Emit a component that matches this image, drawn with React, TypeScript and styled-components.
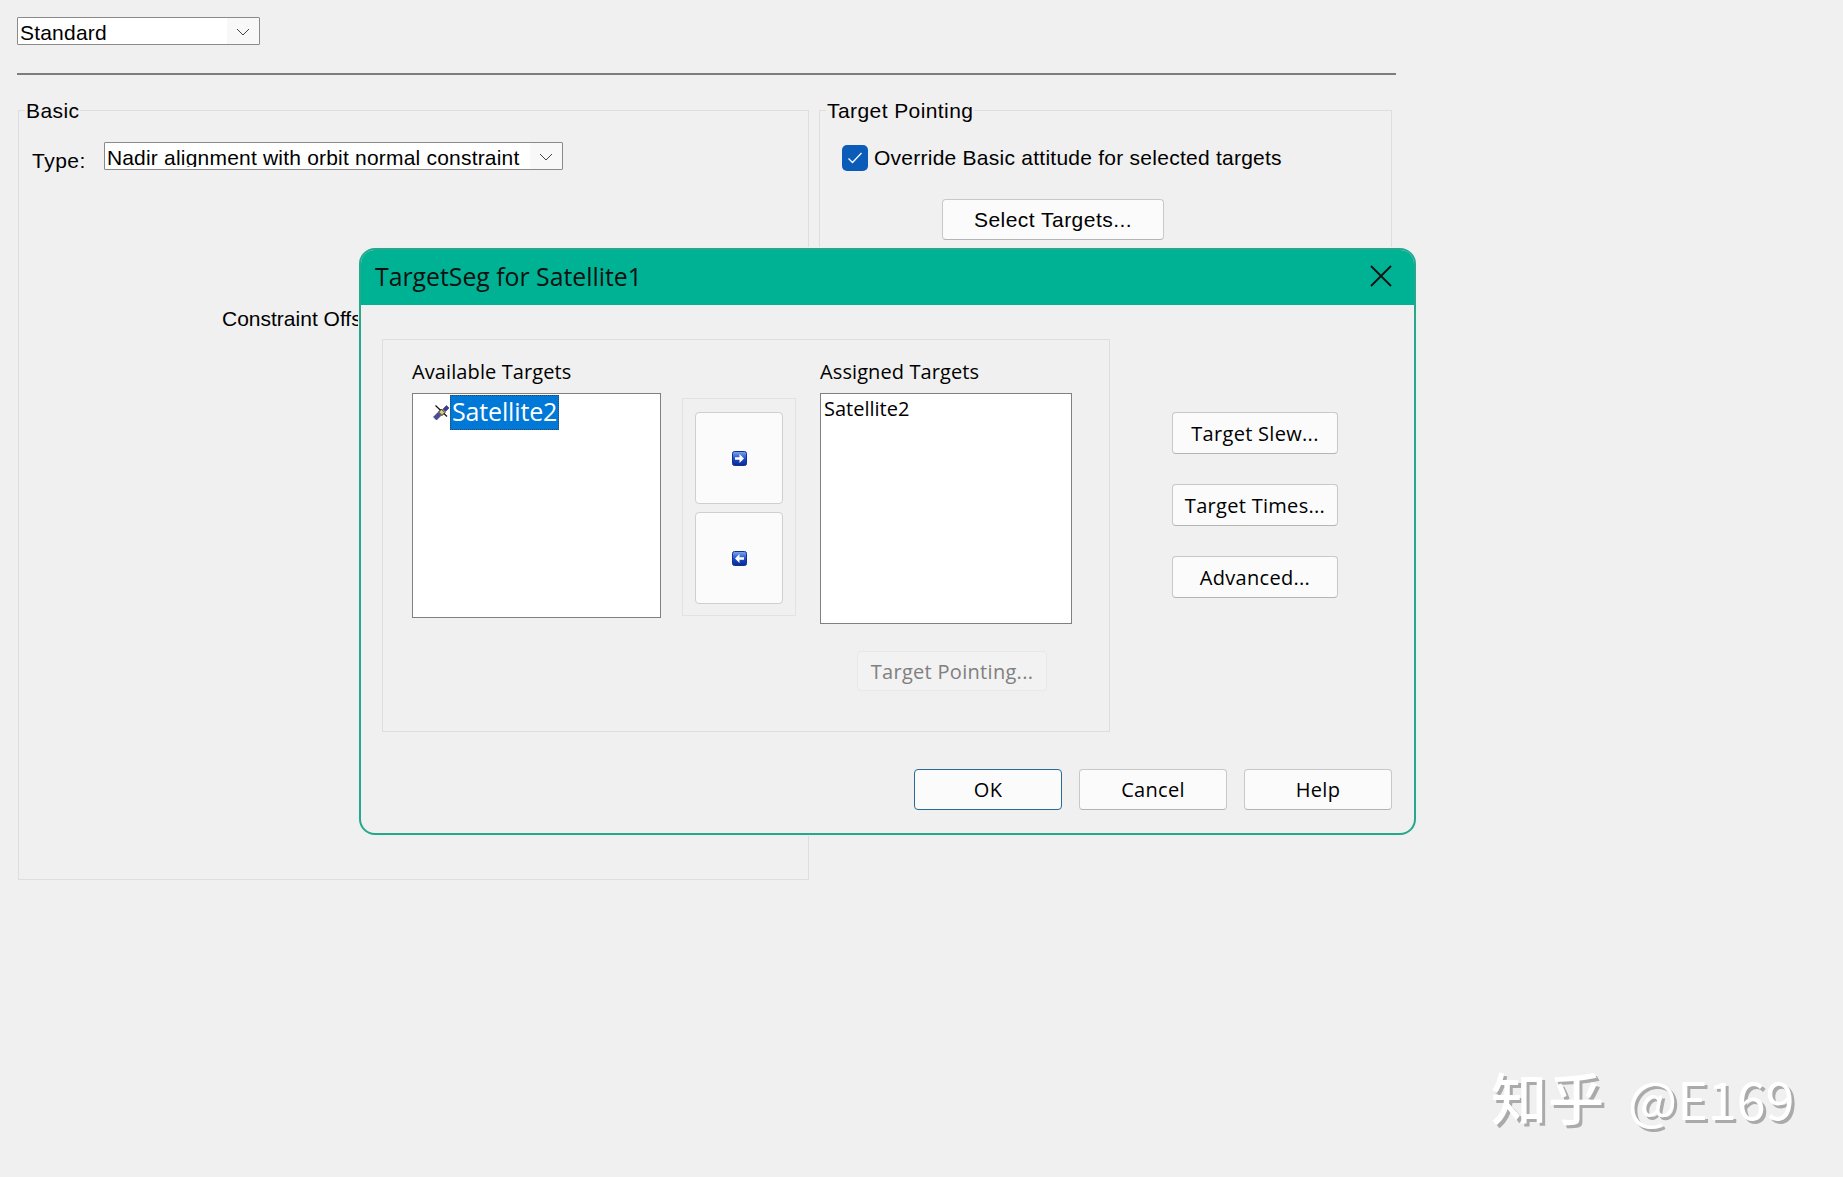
import styled, { createGlobalStyle } from "styled-components";

const GlobalStyle = createGlobalStyle`
    html, body {
        margin: 0;
        padding: 0;
        background: #f0f0f0;
    }
`;

const uiFont = `"Liberation Sans", Arial, sans-serif`;
const dialogFont = `"Open Sans", "Noto Sans", sans-serif`;

const Page = styled.div`
    position: relative;
    width: 1843px;
    height: 1177px;
    overflow: hidden;
    box-sizing: border-box;
    padding: 17px 0 0 17px;
    background: #f0f0f0;
    color: #000;
    font-family: ${uiFont};
    font-size: 21px;
`;

const Combo = styled.div<{ $width: number }>`
    display: flex;
    align-items: flex-start;
    box-sizing: border-box;
    width: ${(p) => p.$width}px;
    height: 28px;
    background: #fff;
    border: 1px solid #8a8a8a;
    border-radius: 1px;
`;

const ComboText = styled.div`
    flex: 1;
    height: 24px;
    padding-left: 2px;
    line-height: 30px;
    white-space: nowrap;
    letter-spacing: 0.2px;
`;

// the long value loses the bottom of its descenders, as in the real control
const ClippedComboText = styled(ComboText)`
    overflow: hidden;
`;

const ComboArrow = styled.div`
    display: flex;
    align-items: center;
    justify-content: center;
    box-sizing: border-box;
    width: 32px;
    height: 26px;
    padding-top: 2px;
    background: #f8f8f8;
`;

const Divider = styled.div`
    width: 1379px;
    height: 2px;
    margin-top: 28px;
    background: #7d7d7d;
`;

const GroupRow = styled.div`
    display: flex;
    gap: 10px;
    margin: 22px 0 0 1px;
`;

const Group = styled.fieldset<{ $width: number; $height: number }>`
    box-sizing: border-box;
    width: ${(p) => p.$width}px;
    height: ${(p) => p.$height}px;
    margin: 0;
    padding: 0;
    border: 1px solid #dedede;
`;

const GroupTitle = styled.legend`
    margin-left: 6px;
    padding: 0 1px;
    height: 26px;
    line-height: 28px;
    letter-spacing: 0.42px;
`;

const TypeRow = styled.div`
    display: flex;
    align-items: flex-start;
    gap: 18px;
    margin: 19px 0 0 13px;
`;

const TypeLabel = styled.div`
    margin-top: 7px;
    line-height: 24px;
    letter-spacing: 0.5px;
`;

const OffsetLabel = styled.div`
    margin: 134px 0 0 203px;
    line-height: 24px;
    white-space: nowrap;
`;

const CheckRow = styled.div`
    display: flex;
    align-items: center;
    gap: 6px;
    margin: 22px 0 0 22px;
    letter-spacing: 0.25px;
`;

const CheckBox = styled.div`
    display: flex;
    align-items: center;
    justify-content: center;
    width: 26px;
    height: 26px;
    border-radius: 5px;
    background: #0a5cb8;
`;

const SelectRow = styled.div`
    display: flex;
    margin: 28px 0 0 122px;
`;

const PushButton = styled.button<{ $width: number; $height?: number; $default?: boolean }>`
    box-sizing: border-box;
    width: ${(p) => p.$width}px;
    height: ${(p) => p.$height ?? 41}px;
    padding: 0;
    background: #fbfbfb;
    border: 1px solid ${(p) => (p.$default ? "#2a6a96" : "#c8c8c8")};
    border-bottom-color: ${(p) => (p.$default ? "#2a6a96" : "#b4b4b4")};
    border-radius: 4px;
    color: #000;
    font-family: ${dialogFont};
    font-size: 20px;
    letter-spacing: 0.3px;
    white-space: nowrap;
`;

const SelectButton = styled(PushButton)`
    font-family: ${uiFont};
    font-size: 21px;
    letter-spacing: 0.47px;
`;

const Dialog = styled.div`
    position: absolute;
    left: 359px;
    top: 248px;
    display: flex;
    flex-direction: column;
    box-sizing: border-box;
    width: 1057px;
    height: 587px;
    background: #f0f0f0;
    border: 2px solid #2aa58e;
    border-radius: 16px;
    box-shadow: 0 0 0 1px #e2f4f0;
    font-family: ${dialogFont};
    overflow: hidden;
`;

const TitleBar = styled.div`
    display: flex;
    align-items: center;
    justify-content: space-between;
    flex: none;
    height: 57px;
    margin: -2px -2px 0;
    padding: 0 24px 2px 16px;
    box-sizing: border-box;
    background: #00b294;
`;

const Title = styled.div`
    font-size: 24.8px;
    color: #111;
`;

const DialogBody = styled.div`
    display: flex;
    align-items: flex-start;
    padding: 34px 0 0 21px;
`;

const TargetsPanel = styled.div`
    display: grid;
    grid-template-columns: 249px 117px 252px;
    column-gap: 21px;
    box-sizing: border-box;
    width: 728px;
    height: 393px;
    padding: 20px 0 0 29px;
    border: 1px solid #dedede;
`;

const TargetColumn = styled.div`
    display: flex;
    flex-direction: column;
`;

const ListLabel = styled.div`
    height: 24px;
    margin-bottom: 9px;
    font-size: 20px;
    line-height: 24px;
    letter-spacing: 0.1px;
    color: #000;
`;

const ListBox = styled.div<{ $height: number }>`
    box-sizing: border-box;
    height: ${(p) => p.$height}px;
    background: #fff;
    border: 1px solid #808080;
`;

const TreeRow = styled.div`
    display: flex;
    align-items: center;
    margin: 1px 0 0 20px;
`;

const TreeSelection = styled.div`
    box-sizing: border-box;
    height: 35px;
    padding: 0 2px;
    background: #0078d7;
    outline: 1px dotted #3c4650;
    outline-offset: -1px;
    color: #fff;
    font-size: 25px;
    letter-spacing: -0.15px;
    line-height: 33px;
`;

const AssignedItem = styled.div`
    padding-left: 3px;
    font-size: 20px;
    line-height: 30px;
`;

const MovePanel = styled.div`
    display: flex;
    flex-direction: column;
    gap: 8px;
    box-sizing: border-box;
    width: 114px;
    height: 218px;
    margin-top: 38px;
    padding: 13px 12px 0;
    border: 1px solid #e2e2e2;
`;

const MoveButton = styled.div`
    display: flex;
    align-items: center;
    justify-content: center;
    box-sizing: border-box;
    height: 92px;
    background: #fbfbfb;
    border: 1px solid #cfcfcf;
    border-radius: 4px;
`;

const DisabledButton = styled(PushButton)`
    align-self: flex-start;
    margin: 27px 0 0 37px;
    background: #f2f2f2;
    border: 1px solid #e8e8e8;
    color: #808080;
`;

const SideButtons = styled.div`
    display: flex;
    flex-direction: column;
    gap: 30px;
    margin: 73px 0 0 62px;
`;

const DialogFooter = styled.div`
    display: flex;
    justify-content: flex-end;
    gap: 17px;
    margin-top: 37px;
    padding-right: 22px;
`;

const Watermark = styled.div`
    position: absolute;
    left: 1491px;
    top: 1061px;
    color: #fff;
    font-family: "Noto Sans CJK SC", "Noto Sans", sans-serif;
    font-size: 56px;
    font-weight: 500;
    line-height: 70px;
    letter-spacing: 1px;
    white-space: nowrap;
    text-shadow: 3px 3px 0 #aaa;
`;

const WatermarkHandle = styled.span`
    margin-left: 23px;
    font-size: 52px;
    font-weight: 400;
    letter-spacing: 0;
`;

function Chevron() {
	return (
		<svg width="14" height="8" viewBox="0 0 14 8" fill="none" stroke="#444" strokeWidth="1">
			<path d="M1 1l6 6 6-6" />
		</svg>
	);
}

function SatelliteIcon() {
	return (
		<svg width="17" height="17" viewBox="0 0 17 17">
			<path d="M0.5 13L5 8.5l3 3L3.5 16z" fill="#4a4aa0" stroke="#2c2c70" strokeWidth="0.6" />
			<path d="M10 5L13.5 1.5l2.5 2.5L12.5 7.5z" fill="#3c3c90" stroke="#2c2c70" strokeWidth="0.6" />
			<path d="M2.5 1.5l11.5 11" stroke="#111" strokeWidth="1.2" fill="none" />
			<path d="M5.5 8l3-3 3.5 3.5-3 3z" fill="#d8c878" stroke="#111" strokeWidth="1" />
		</svg>
	);
}

function MoveIcon({ dir }: { dir: "left" | "right" }) {
	const id = `move-${dir}`;
	return (
		<svg width="15" height="15" viewBox="0 0 15 15">
			<defs>
				<linearGradient id={id} x1="0" y1="0" x2="0" y2="1">
					<stop offset="0" stopColor="#7fa8f0" />
					<stop offset="0.55" stopColor="#1a48c0" />
					<stop offset="1" stopColor="#0c2a90" />
				</linearGradient>
			</defs>
			<rect x="0.5" y="0.5" width="14" height="14" rx="2" fill={`url(#${id})`} stroke="#10309a" />
			<path
				d={dir === "right" ? "M3 6.3h4.5V3l4.5 4.5L7.5 12V8.7H3z" : "M12 6.3H7.5V3L3 7.5 7.5 12V8.7H12z"}
				fill="#fff"
			/>
		</svg>
	);
}

export default function App() {
	return (
		<Page>
			<GlobalStyle />
			<Combo $width={243}>
				<ComboText>Standard</ComboText>
				<ComboArrow>
					<Chevron />
				</ComboArrow>
			</Combo>
			<Divider />
			<GroupRow>
				<Group $width={791} $height={771 + 12}>
					<GroupTitle>Basic</GroupTitle>
					<TypeRow>
						<TypeLabel>Type:</TypeLabel>
						<Combo $width={459}>
							<ClippedComboText>Nadir alignment with orbit normal constraint</ClippedComboText>
							<ComboArrow>
								<Chevron />
							</ComboArrow>
						</Combo>
					</TypeRow>
					<OffsetLabel>Constraint Offset:</OffsetLabel>
				</Group>
				<Group $width={573} $height={600}>
					<GroupTitle>Target Pointing</GroupTitle>
					<CheckRow>
						<CheckBox>
							<svg width="16" height="14" viewBox="0 0 16 14" fill="none" stroke="#fff" strokeWidth="1.3">
								<path d="M1.5 7.5l4 4 9-9.500" />
							</svg>
						</CheckBox>
						Override Basic attitude for selected targets
					</CheckRow>
					<SelectRow>
						<SelectButton $width={222}>Select Targets...</SelectButton>
					</SelectRow>
				</Group>
			</GroupRow>

			<Dialog>
				<TitleBar>
					<Title>TargetSeg for Satellite1</Title>
					<svg width="22" height="22" viewBox="0 0 22 22" fill="none" stroke="#111" strokeWidth="1.8">
						<path d="M1 1l20 20M21 1L1 21" />
					</svg>
				</TitleBar>
				<DialogBody>
					<TargetsPanel>
						<TargetColumn>
							<ListLabel>Available Targets</ListLabel>
							<ListBox $height={225}>
								<TreeRow>
									<SatelliteIcon />
									<TreeSelection>Satellite2</TreeSelection>
								</TreeRow>
							</ListBox>
						</TargetColumn>
						<MovePanel>
							<MoveButton>
								<MoveIcon dir="right" />
							</MoveButton>
							<MoveButton>
								<MoveIcon dir="left" />
							</MoveButton>
						</MovePanel>
						<TargetColumn>
							<ListLabel>Assigned Targets</ListLabel>
							<ListBox $height={231}>
								<AssignedItem>Satellite2</AssignedItem>
							</ListBox>
							<DisabledButton $width={190} $height={40}>
								Target Pointing...
							</DisabledButton>
						</TargetColumn>
					</TargetsPanel>
					<SideButtons>
						<PushButton $width={166} $height={42}>Target Slew...</PushButton>
						<PushButton $width={166} $height={42}>Target Times...</PushButton>
						<PushButton $width={166} $height={42}>Advanced...</PushButton>
					</SideButtons>
				</DialogBody>
				<DialogFooter>
					<PushButton $width={148} $default>OK</PushButton>
					<PushButton $width={148}>Cancel</PushButton>
					<PushButton $width={148}>Help</PushButton>
				</DialogFooter>
			</Dialog>

			<Watermark>
				知乎<WatermarkHandle>@E169</WatermarkHandle>
			</Watermark>
		</Page>
	);
}
